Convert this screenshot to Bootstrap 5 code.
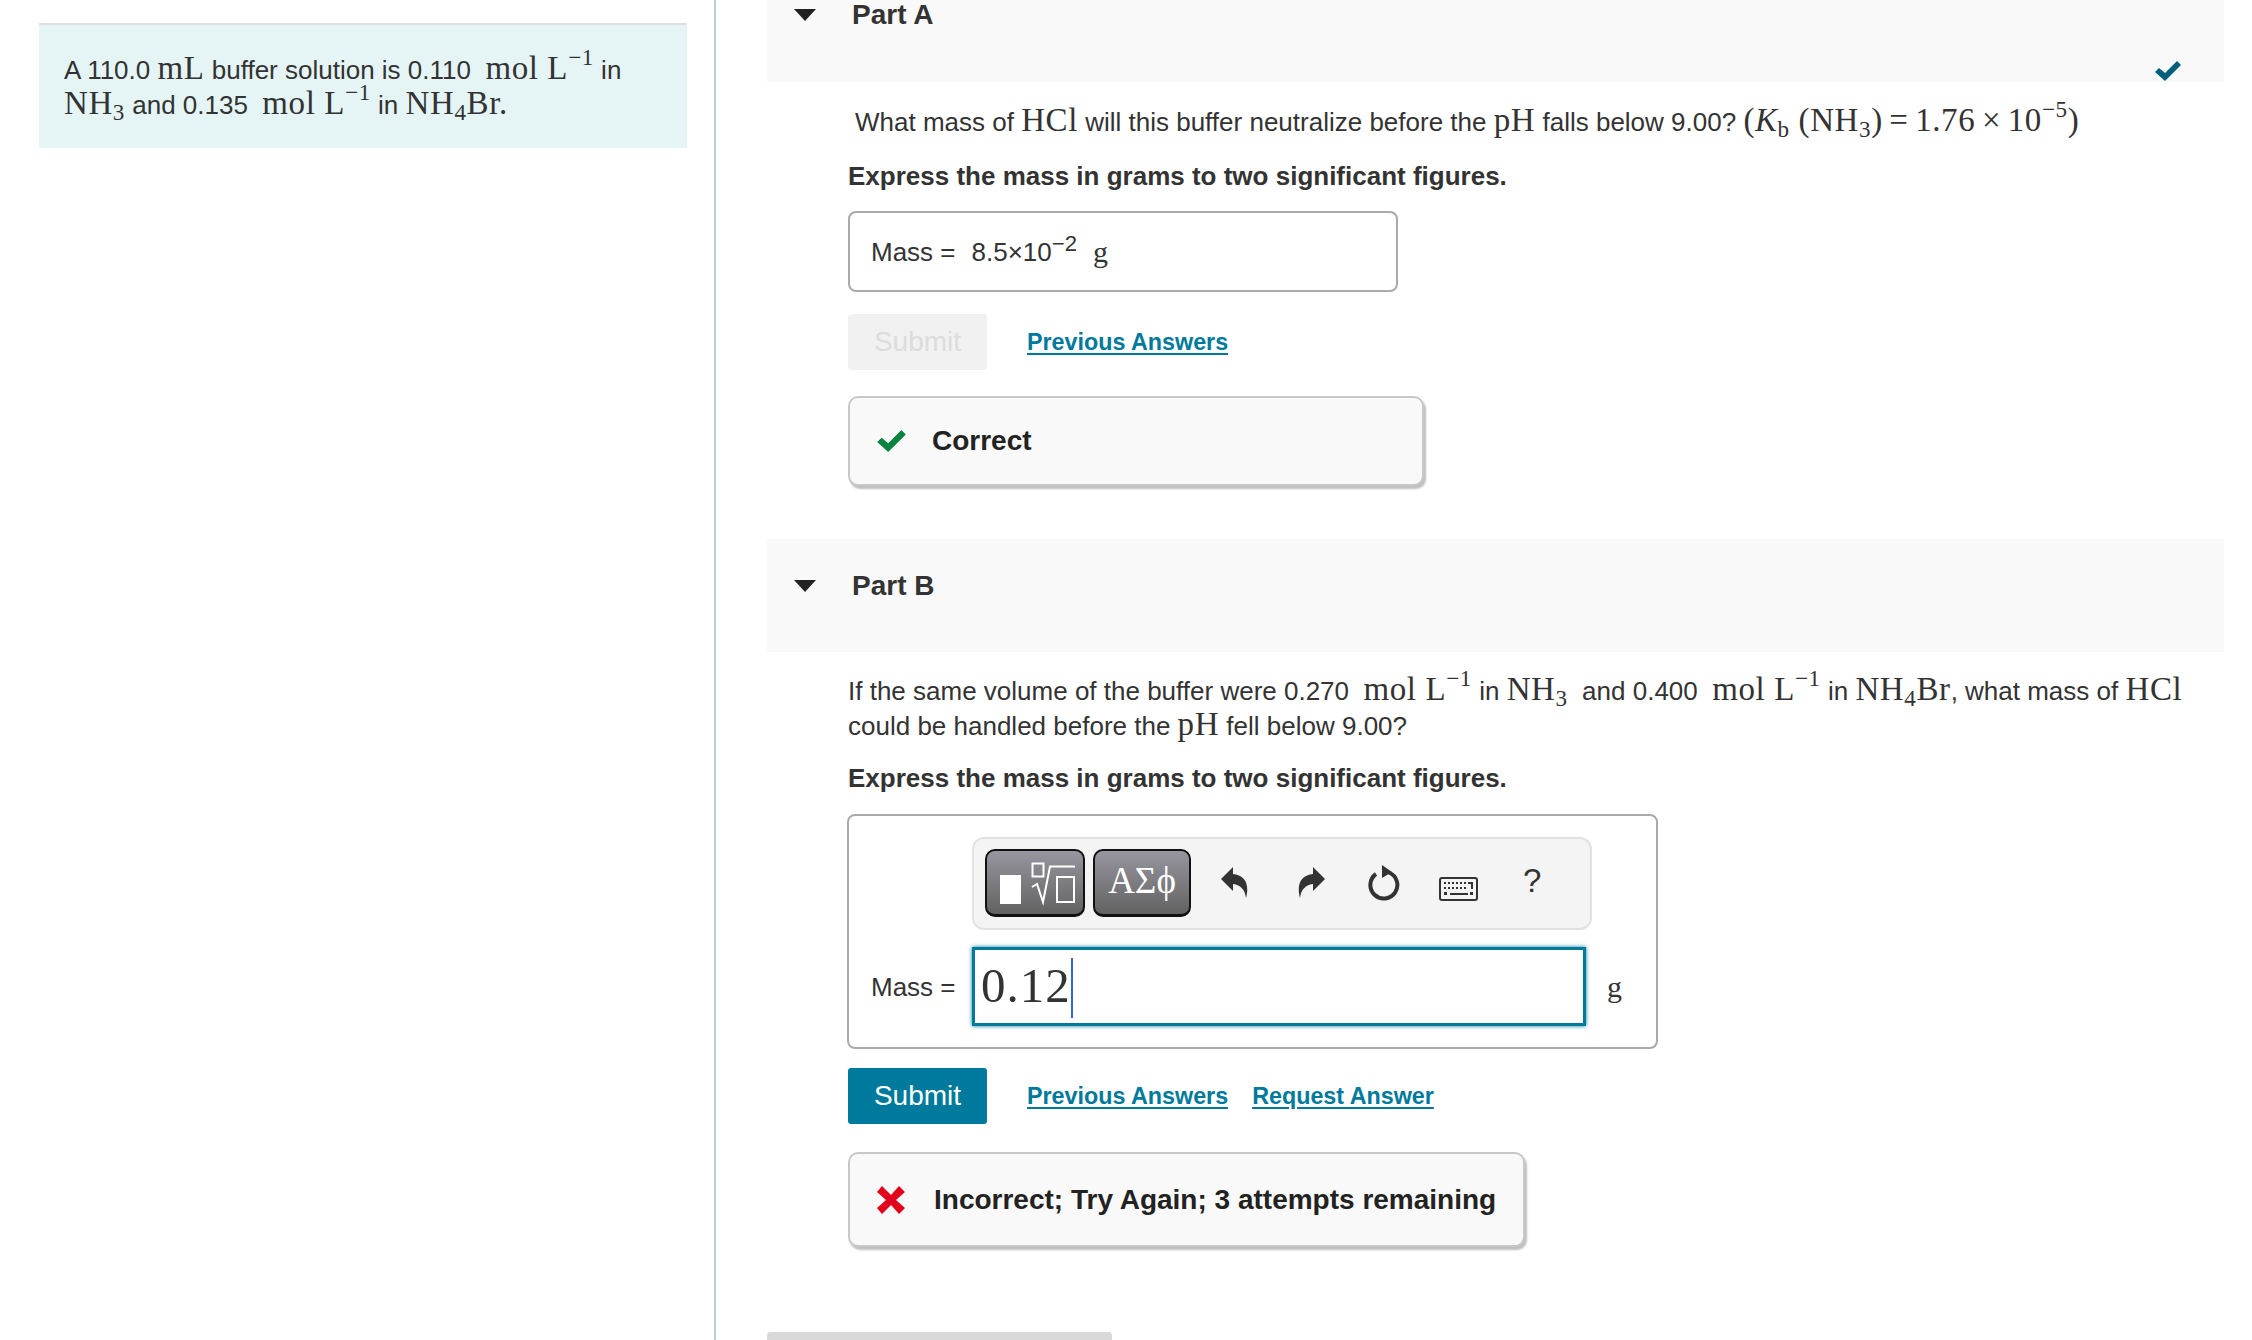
<!DOCTYPE html>
<html lang="en">
<head>
<meta charset="utf-8">
<title>Buffer problem</title>
<link href="https://cdn.jsdelivr.net/npm/bootstrap@5.3.0/dist/css/bootstrap.min.css" rel="stylesheet">
<style>
html,body{height:1340px;overflow:hidden;background:#fff}
body{font-family:"Liberation Sans",Arial,sans-serif;font-size:26px;line-height:34px;color:#333}
.shell{height:1340px}
.m{font-family:"Liberation Serif",serif;font-size:33px;line-height:1;letter-spacing:.018em}
.m sub,.m sup{font-size:.7em;line-height:0}
.m sup{top:-.62em}
.m .sp{margin:0 .2em}
.left-col{width:716px;flex:none;border-right:2px solid #b9cfe0;padding:23px 27px 0 39px}
.intro{background:#e5f5f6;border-top:2px solid #dcdedf;height:125px;padding:27px 25px 0;color:#333}
.right-col{width:1457px;flex:none;margin-left:51px}
.part-head{height:82px;background:#f9f9f9;position:relative;padding-left:85px;font-weight:700;line-height:30px;font-size:28px;color:#333}
.part-b{height:113px;padding-top:24px;line-height:46px;margin-top:53px}
.tri{position:absolute;left:27px;top:9px;display:block}
.part-b .tri{top:41px}
.check-done{position:absolute;left:1388px;top:61px}
.q-text{padding-left:81px;margin:0}
.q-a{padding-left:88px;padding-top:22px}
.q-b{padding-top:21px;line-height:33px}
.hint{padding-left:81px;font-weight:700;margin:20px 0 0}
.hint-b{margin-top:18px}
.ans-a{margin:18px 0 0 81px;width:550px;height:81px;border:2px solid #aaa;border-radius:8px;padding:0 21px;font-size:26px}
.ans-a sup{font-size:.85em;top:-.42em}
.unit{font-family:"Liberation Serif",serif;font-size:30px}
.unit-b{margin-left:21px}
.act{margin:22px 0 0 81px;gap:40px}
.act-b{margin-top:19px}
.sub-btn{width:139px;height:56px;border:0;border-radius:3px;background:#007a9c;color:#fff;font-size:28px;padding:0;font-family:inherit}
.sub-btn:disabled{background:#f1f1f1;color:#dcdcdc;opacity:1}
.act a{color:#007a9c;font-weight:700;font-size:23.300px;text-decoration-thickness:2px;text-underline-offset:3px}
.fb{margin:26px 0 0 81px;background:#f9f9f9;border:2px solid #c8c8c8;border-radius:10px;box-shadow:2px 3px 2px #bfbfbf;color:#222;font-weight:700;font-size:28px;padding:0 10px 0 27px;white-space:nowrap}
.fb-ok{width:576px;height:90px;gap:26px}
.fb-no{width:677px;height:95px;gap:29px;margin-top:28px}
.ans-b{margin:19px 0 0 80px;width:811px;height:235px;border:2px solid #aaa;border-radius:8px;padding:21px 0 0 22px;font-size:26px}
.tools{width:620px;height:93px;margin-left:101px;background:#f4f4f4;border:2px solid #e2e2e2;border-radius:12px;padding:10px 0 0 11px;position:relative}
.tbtn{height:68px;border:2px solid #111;border-bottom-width:3px;border-radius:10px;background:linear-gradient(#98969f,#626262);color:#fff;margin-right:8px;padding:0}
.tb1{width:100px}
.tb2{width:98px;font-family:"Liberation Serif",serif;font-size:37px;line-height:60px;text-align:center}
.ticon{position:absolute;display:block}
.qmark{position:absolute;left:549px;top:22px;font-size:33px;line-height:40px;color:#333}
.inrow{margin-top:17px}
.mass-lab{width:101px;flex:none;white-space:nowrap}
.math-in{width:614px;height:79px;flex:none;border:3px solid #007a9c;box-shadow:0 0 4px #007a9c;background:#fff;font-family:"Liberation Serif",serif;font-size:49px;line-height:71px;letter-spacing:1px;padding-left:6px;color:#333}
.caret-bar{display:inline-block;width:2px;height:60px;background:#3565d0;vertical-align:middle;margin-top:-6px}
.grey-tab{position:absolute;left:767px;top:1332px;width:345px;height:8px;background:#d9d9d9;border-radius:4px 4px 0 0}
</style>
</head>
<body>
<div class="d-flex shell">
  <aside class="left-col">
    <div class="intro">A 110.0 <span class="m">mL</span> buffer solution is 0.110 &nbsp;<span class="m">mol L<sup>−1</sup></span> in <span class="m">NH<sub>3</sub></span> and 0.135 &nbsp;<span class="m">mol L<sup>−1</sup></span> in <span class="m">NH<sub>4</sub>Br.</span></div>
  </aside>
  <main class="right-col">
    <section>
      <div class="part-head">
        <svg class="tri" width="22" height="12" viewBox="0 0 22 12"><path d="M0 0H22L11 12Z" fill="#222"/></svg>
        Part A
        <svg class="check-done" width="26" height="20" viewBox="0 0 26 20"><path d="M0 11L4 7L10 12L22 0L26 4L10 20Z" fill="#00607c"/></svg>
      </div>
      <p class="q-text q-a">What mass of <span class="m">HCl</span> will this buffer neutralize before the <span class="m">pH</span> falls below 9.00? <span class="m">(<i>K</i><sub>b</sub> (NH<sub>3</sub>)<span class="sp">=</span>1.76<span class="sp">×</span>10<sup>−5</sup>)</span></p>
      <p class="hint">Express the mass in grams to two significant figures.</p>
      <div class="ans-a d-flex align-items-center"><span>Mass =</span><span class="ms-3">8.5×10<sup>−2</sup></span><span class="unit ms-3">g</span></div>
      <div class="act d-flex align-items-center">
        <button class="sub-btn" disabled>Submit</button>
        <a href="#">Previous Answers</a>
      </div>
      <div class="fb fb-ok d-flex align-items-center">
        <svg width="29" height="22" viewBox="0 0 26 20"><path d="M0 11L4 7L10 12L22 0L26 4L10 20Z" fill="#0a8240"/></svg>
        <span>Correct</span>
      </div>
    </section>
    <section>
      <div class="part-head part-b">
        <svg class="tri" width="22" height="12" viewBox="0 0 22 12"><path d="M0 0H22L11 12Z" fill="#222"/></svg>
        Part B
      </div>
      <p class="q-text q-b">If the same volume of the buffer were 0.270 &nbsp;<span class="m">mol L<sup>−1</sup></span> in <span class="m">NH<sub>3</sub></span> &nbsp;and 0.400 &nbsp;<span class="m">mol L<sup>−1</sup></span> in <span class="m">NH<sub>4</sub>Br</span>, what mass of <span class="m">HCl</span> could be handled before the <span class="m">pH</span> fell below 9.00?</p>
      <p class="hint hint-b">Express the mass in grams to two significant figures.</p>
      <div class="ans-b">
        <div class="tools d-flex">
          <div class="tbtn tb1 position-relative">
            <svg class="ticon" style="left:0;top:0" width="96" height="64" viewBox="0 0 96 64"><rect x="13" y="24" width="21" height="29" fill="#fff"/><rect x="45.500" y="12.500" width="11" height="13" fill="none" stroke="#fff" stroke-width="2"/><rect x="70" y="26" width="17" height="25" fill="none" stroke="#fff" stroke-width="2"/><path d="M45 36L50 33L56 51L63 15.500H88" fill="none" stroke="#fff" stroke-width="2"/></svg>
          </div>
          <div class="tbtn tb2">ΑΣϕ</div>
          <svg class="ticon" style="left:247px;top:28px" width="27" height="31" viewBox="0 0 27 31"><path d="M0 12L12 0V7C23 8 29 16 25 31C24 23 20 18 12 17V24Z" fill="#333"/></svg>
          <svg class="ticon" style="left:324px;top:28px" width="27" height="31" viewBox="0 0 27 31"><path d="M27 12L15 0V7C4 8 -2 16 2 31C3 23 7 18 15 17V24Z" fill="#333"/></svg>
          <svg class="ticon" style="left:394px;top:26px" width="33" height="37" viewBox="0 0 33 37"><path d="M21 7.500A13.500 13.500 0 1 1 8 9" fill="none" stroke="#333" stroke-width="4"/><path d="M14 0L24 7L14 13Z" fill="#333"/></svg>
          <svg class="ticon" style="left:465px;top:38px" width="39" height="24" viewBox="0 0 39 24"><rect x="1" y="1" width="37" height="22" rx="2" fill="none" stroke="#333" stroke-width="2"/><path d="M5 5h2v2h-2zM9 5h2v2h-2zM13 5h2v2h-2zM17 5h2v2h-2zM21 5h2v2h-2zM25 5h2v2h-2zM29 5h5v7h-2v-5h-3zM5 10h2v2h-2zM9 10h2v2h-2zM13 10h2v2h-2zM17 10h2v2h-2zM21 10h2v2h-2zM25 10h2v2h-2zM5 15h3v3h-3zM11 16h18v2h-18zM31 15h3v3h-3z" fill="#333"/></svg>
          <span class="qmark">?</span>
        </div>
        <div class="inrow d-flex align-items-center">
          <span class="mass-lab">Mass =</span>
          <div class="math-in">0.12<span class="caret-bar"></span></div>
          <span class="unit unit-b">g</span>
        </div>
      </div>
      <div class="act act-b d-flex align-items-center">
        <button class="sub-btn">Submit</button>
        <div class="d-flex gap-4"><a href="#">Previous Answers</a><a href="#">Request Answer</a></div>
      </div>
      <div class="fb fb-no d-flex align-items-center">
        <svg width="28" height="28" viewBox="0 0 28 28"><path d="M5 0L14 9L22 0L28 6L19 14L28 22L22 28L14 19L5 28L0 22L9 14L0 6Z" fill="#e2001a"/></svg>
        <span>Incorrect; Try Again; 3 attempts remaining</span>
      </div>
    </section>
  </main>
</div>
<div class="grey-tab"></div>
<script src="https://cdn.jsdelivr.net/npm/bootstrap@5.3.0/dist/js/bootstrap.bundle.min.js"></script>
</body>
</html>
